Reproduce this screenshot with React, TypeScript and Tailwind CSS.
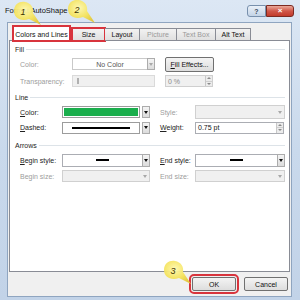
import { ReactNode } from 'react';

const font = { fontFamily: '"Liberation Sans", Arial, sans-serif' };

const Arrow = ({ disabled }: { disabled?: boolean }) => (
  <div className="w-[8px] h-full border border-[#acacac] bg-gradient-to-b from-[#f4f4f4] to-[#dcdcdc] flex items-center justify-center shrink-0">
    <div
      className={`w-0 h-0 border-l-[2.5px] border-r-[2.5px] border-t-[3px] border-l-transparent border-r-transparent ${disabled ? 'border-t-[#a8a8a8]' : 'border-t-[#111]'}`}
    />
  </div>
);

const Spin = () => (
  <div className="w-[7px] h-full flex flex-col border-l border-[#c8c8c8] shrink-0">
    <div className="flex-1 flex items-center justify-center bg-[#ececec] border-b border-[#cfcfcf]">
      <div className="w-0 h-0 border-l-[2px] border-r-[2px] border-b-[2px] border-l-transparent border-r-transparent border-b-[#8a8a8a]" />
    </div>
    <div className="flex-1 flex items-center justify-center bg-[#ececec]">
      <div className="w-0 h-0 border-l-[2px] border-r-[2px] border-t-[2px] border-l-transparent border-r-transparent border-t-[#8a8a8a]" />
    </div>
  </div>
);

const Section = ({ label }: { label: string }) => (
  <div className="flex items-center h-[10px] pl-[5px] pr-[4px] gap-[2px]">
    <span className="text-[#1e1e1e]">{label}</span>
    <div className="flex-1 h-px bg-[#dde3e8]" />
  </div>
);

const Label = ({ children, w, gray }: { children: ReactNode; w: string; gray?: boolean }) => (
  <div className={`${w} shrink-0 ${gray ? 'text-[#9c9c9c]' : 'text-[#222]'}`}>{children}</div>
);

const Callout = ({ n, x, y }: { n: string; x: number; y: number }) => (
  <svg className="absolute" style={{ left: x, top: y }} width="34" height="30" viewBox="0 0 34 30">
    <defs>
      <radialGradient id={`g${n}`} cx="0.4" cy="0.35" r="0.7">
        <stop offset="0" stopColor="#fff9b0" />
        <stop offset="0.6" stopColor="#f4e25a" />
        <stop offset="1" stopColor="#e2c83a" />
      </radialGradient>
    </defs>
    <path
      d="M4 11 C4 4 10 1 15 2 C21 3 24 8 23 13 L31 25 L19 19 C11 22 4 18 4 11 Z"
      fill={`url(#g${n})`}
      opacity="0.95"
    />
    <text x="13" y="15" fontSize="9" fontStyle="italic" fill="#3a3000" fontFamily="Liberation Sans, Arial, sans-serif" textAnchor="middle">
      {n}
    </text>
  </svg>
);

export default function App() {
  return (
    <div className="relative w-[300px] h-[300px] overflow-hidden bg-gradient-to-b from-[#dce7f4] via-[#c9d9ec] to-[#c2d3e8] text-[7px] leading-none" style={font}>
      {/* title bar */}
      <div className="h-[22px] flex items-start pt-[6px] pl-[5px] pr-[6px]">
        <span className="text-[7.5px] text-[#111] mt-[1px]">Format AutoShape</span>
        <div className="ml-auto flex mt-[-1px]">
          <div className="w-[19px] h-[12px] border border-[#7890ad] rounded-l-[3px] bg-gradient-to-b from-[#eaf1f9] to-[#c3d3e6] flex items-center justify-center text-[7px] text-[#3c4a5a] font-bold">
            ?
          </div>
          <div className="w-[28px] h-[12px] border border-[#7c2a22] rounded-r-[3px] bg-gradient-to-b from-[#e9a99c] via-[#d0574a] to-[#c23a2a] flex items-center justify-center text-[8px] text-white font-bold">
            ×
          </div>
        </div>
      </div>

      {/* dialog body */}
      <div className="ml-[7px] mr-[8px] h-[275px] bg-[#f0f0f0] border border-[#8fa5c0] flex flex-col">
        {/* tabs */}
        <div className="flex items-end h-[15px] mt-[3px] pl-[5px] relative z-10">
          <div className="w-[57px] h-[15px] bg-white border border-[#898c95] border-b-0 flex items-center justify-center text-[#111] outline-2 outline-[#d8343d] -outline-offset-1">
            Colors and Lines
          </div>
          <div className="w-[33px] h-[13px] ml-[2px] bg-gradient-to-b from-[#f2f2f2] to-[#e0e0e0] border border-[#898c95] flex items-center justify-center text-[#111] outline-2 outline-[#d8343d] -outline-offset-1">
            Size
          </div>
          <div className="w-[35px] h-[13px] bg-gradient-to-b from-[#f2f2f2] to-[#e0e0e0] border border-l-0 border-[#898c95] flex items-center justify-center text-[#111]">
            Layout
          </div>
          <div className="w-[37px] h-[13px] bg-gradient-to-b from-[#f2f2f2] to-[#e0e0e0] border border-l-0 border-[#898c95] flex items-center justify-center text-[#9a9a9a]">
            Picture
          </div>
          <div className="w-[39px] h-[13px] bg-gradient-to-b from-[#f2f2f2] to-[#e0e0e0] border border-l-0 border-[#898c95] flex items-center justify-center text-[#9a9a9a]">
            Text Box
          </div>
          <div className="w-[35px] h-[13px] bg-gradient-to-b from-[#f2f2f2] to-[#e0e0e0] border border-l-0 border-[#898c95] flex items-center justify-center text-[#111]">
            Alt Text
          </div>
        </div>

        {/* panel */}
        <div className="mx-[1px] -mt-px h-[232px] bg-white border border-[#898c95] flex flex-col pt-[3px]">
          <Section label="Fill" />
          <div className="flex items-center h-[16px] mt-[2px] pl-[10px]">
            <Label w="w-[52px]" gray>Color:</Label>
            <div className="w-[83px] h-[12px] flex">
              <div className="flex-1 border border-[#c9c9c9] border-r-0 flex items-center justify-center text-[#555]">No Color</div>
              <Arrow disabled />
            </div>
            <div className="ml-[10px] w-[49px] h-[15px] border border-[#707070] rounded-[2px] bg-gradient-to-b from-[#f4f4f4] to-[#dddddd] flex items-center justify-center text-[#111]">
              <span><span className="underline">F</span>ill Effects...</span>
            </div>
          </div>
          <div className="flex items-center h-[12px] mt-[3px] pl-[10px]">
            <Label w="w-[52px]" gray>Transparency:</Label>
            <div className="w-[83px] h-[12px] bg-[#f0f0f0] border border-[#dadada] flex items-center pl-[4px]">
              <div className="w-[2px] h-[6px] bg-[#b0b0b0]" />
            </div>
            <div className="ml-[10px] w-[48px] h-[12px] bg-[#f0f0f0] border border-[#cfcfcf] flex">
              <div className="flex-1 flex items-center pl-[2px] text-[#8a8a8a]">0 %</div>
              <Spin />
            </div>
          </div>

          <div className="mt-[5px]">
            <Section label="Line" />
          </div>
          <div className="flex items-center h-[14px] mt-[3px] pl-[10px]">
            <Label w="w-[42px]"><span className="underline">C</span>olor:</Label>
            <div className="w-[88px] h-[12px] flex gap-[2px]">
              <div className="flex-1 border border-[#9c9c9c] p-[1px]">
                <div className="w-full h-full bg-[#1aae4c]" />
              </div>
              <Arrow />
            </div>
            <Label w="w-[35px] ml-[10px]" gray>Style:</Label>
            <div className="w-[90px] h-[14px] flex bg-[#f0f0f0] border border-[#d0d0d0]">
              <div className="flex-1" />
              <div className="w-[8px] flex items-center justify-center">
                <div className="w-0 h-0 border-l-[2.5px] border-r-[2.5px] border-t-[3px] border-l-transparent border-r-transparent border-t-[#a8a8a8]" />
              </div>
            </div>
          </div>
          <div className="flex items-center h-[13px] mt-[2px] pl-[10px]">
            <Label w="w-[42px]"><span className="underline">D</span>ashed:</Label>
            <div className="w-[88px] h-[12px] flex gap-[2px]">
              <div className="flex-1 border border-[#9c9c9c] flex items-center justify-center bg-white">
                <div className="w-[58px] h-[2px] bg-black" />
              </div>
              <Arrow />
            </div>
            <Label w="w-[35px] ml-[10px]"><span className="underline">W</span>eight:</Label>
            <div className="w-[89px] h-[12px] flex border border-[#abadb3]">
              <div className="flex-1 flex items-center pl-[2px] text-[#111]">0.75 pt</div>
              <Spin />
            </div>
          </div>

          <div className="mt-[6px]">
            <Section label="Arrows" />
          </div>
          <div className="flex items-center h-[14px] mt-[3px] pl-[10px]">
            <Label w="w-[42px]"><span className="underline">B</span>egin style:</Label>
            <div className="w-[88px] h-[13px] flex">
              <div className="flex-1 border border-[#abadb3] border-r-0 flex items-center justify-center">
                <div className="w-[13px] h-[2px] bg-black" />
              </div>
              <Arrow />
            </div>
            <Label w="w-[35px] ml-[10px]"><span className="underline">E</span>nd style:</Label>
            <div className="w-[90px] h-[13px] flex">
              <div className="flex-1 border border-[#abadb3] border-r-0 flex items-center justify-center">
                <div className="w-[13px] h-[2px] bg-black" />
              </div>
              <Arrow />
            </div>
          </div>
          <div className="flex items-center h-[12px] mt-[3px] pl-[10px]">
            <Label w="w-[42px]" gray>Begin size:</Label>
            <div className="w-[88px] h-[12px] flex bg-[#f0f0f0] border border-[#d0d0d0]">
              <div className="flex-1" />
              <div className="w-[8px] flex items-center justify-center">
                <div className="w-0 h-0 border-l-[2.5px] border-r-[2.5px] border-t-[3px] border-l-transparent border-r-transparent border-t-[#a8a8a8]" />
              </div>
            </div>
            <Label w="w-[35px] ml-[10px]" gray>End size:</Label>
            <div className="w-[90px] h-[12px] flex bg-[#f0f0f0] border border-[#d0d0d0]">
              <div className="flex-1" />
              <div className="w-[8px] flex items-center justify-center">
                <div className="w-0 h-0 border-l-[2.5px] border-r-[2.5px] border-t-[3px] border-l-transparent border-r-transparent border-t-[#a8a8a8]" />
              </div>
            </div>
          </div>
        </div>

        {/* buttons */}
        <div className="flex-1 flex items-center justify-end gap-[8px] pr-[3px]">
          <div className="w-[44px] h-[14px] border border-[#707070] rounded-[2px] bg-gradient-to-b from-[#f4f4f4] to-[#dddddd] flex items-center justify-center text-[#111] outline-2 outline-[#d8343d] outline-offset-1">
            OK
          </div>
          <div className="w-[44px] h-[14px] border border-[#707070] rounded-[2px] bg-gradient-to-b from-[#f4f4f4] to-[#dddddd] flex items-center justify-center text-[#111]">
            Cancel
          </div>
        </div>
      </div>

      <Callout n="1" x={10} y={0} />
      <Callout n="2" x={64} y={-2} />
      <Callout n="3" x={160} y={259} />
    </div>
  );
}
